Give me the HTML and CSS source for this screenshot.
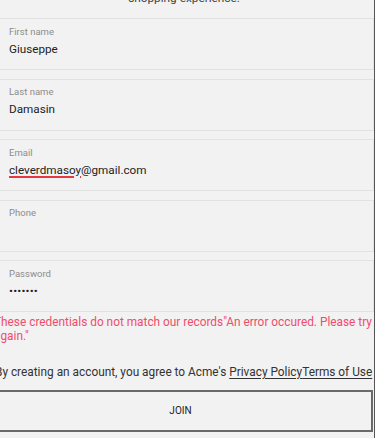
FILE: index.html
```html
<!DOCTYPE html>
<html lang="en">
<head>
<meta charset="utf-8">
<title>Join</title>
<link rel="stylesheet" href="styles.css">
</head>
<body>
<div class="screen">
  <p class="intro">shopping experience.</p>
  <div class="fields">
    <div class="field">
      <div class="label">First name</div>
      <div class="value">Giuseppe</div>
    </div>
    <div class="field">
      <div class="label">Last name</div>
      <div class="value">Damasin</div>
    </div>
    <div class="field">
      <div class="label">Email</div>
      <div class="value"><span class="misspelled">cleverdmasoy</span>@gmail.com</div>
    </div>
    <div class="field">
      <div class="label">Phone</div>
      <div class="value"></div>
    </div>
    <div class="field">
      <div class="label">Password</div>
      <div class="value dots">&#8226;&#8226;&#8226;&#8226;&#8226;&#8226;&#8226;</div>
    </div>
  </div>
  <p class="error">These credentials do not match our records"An error occured. Please try again."</p>
  <p class="terms">By creating an account, you agree to Acme's <a class="link" href="#">Privacy Policy</a><a class="link" href="#">Terms of Use</a></p>
  <button class="join" type="button">JOIN</button>
</div>
</body>
</html>
```
FILE: styles.css
```css
html, body {
  margin: 0;
  padding: 0;
  overflow: hidden;
  background: #f2f2f2;
}

.screen {
  box-sizing: border-box;
  width: 375px;
  height: 438px;
  border-right: 1px solid #555555;
  background: #f2f2f2;
  font-family: Roboto, "Liberation Sans", sans-serif;
  display: flex;
  flex-direction: column;
}

.intro {
  margin: -10px 0 0 -6px;
  width: 380px;
  height: 16px;
  line-height: 16px;
  font-size: 11.8px;
  color: #444444;
  text-align: center;
}

.fields {
  display: flex;
  flex-direction: column;
  gap: 8.5px;
  margin-top: 12px;
}

.field {
  box-sizing: border-box;
  margin-left: -1px;
  width: 375px;
  height: 52px;
  border: 1px solid #e2e2e2;
  padding: 6.5px 0 0 9px;
}

.label {
  font-size: 9.5px;
  line-height: 12px;
  color: #8c8c8c;
}

.value {
  margin-top: 3px;
  font-size: 11.7px;
  line-height: 16px;
  height: 16px;
  color: #222222;
}

.misspelled {
  text-decoration: underline;
  text-decoration-color: #e8383d;
  text-decoration-thickness: 1.5px;
  text-underline-offset: 1.5px;
}

.dots {
  letter-spacing: 0.2px;
}

.error {
  margin: 2.5px 0 0 -6px;
  width: 380px;
  font-size: 11.85px;
  line-height: 14px;
  color: #ee4d6c;
}

.terms {
  margin: 22px 0 0 -5px;
  width: 380px;
  font-size: 11.85px;
  line-height: 14px;
  color: #333333;
  white-space: nowrap;
}

.link {
  color: #333333;
  text-decoration: underline;
  text-underline-offset: 1.5px;
}

.join {
  box-sizing: border-box;
  margin: 11px 0 0 -12px;
  width: 385px;
  height: 42px;
  border: 2px solid #6a6a6a;
  background: #f2f2f2;
  font-family: Roboto, "Liberation Sans", sans-serif;
  font-size: 10px;
  color: #222222;
  padding: 0;
}
```
